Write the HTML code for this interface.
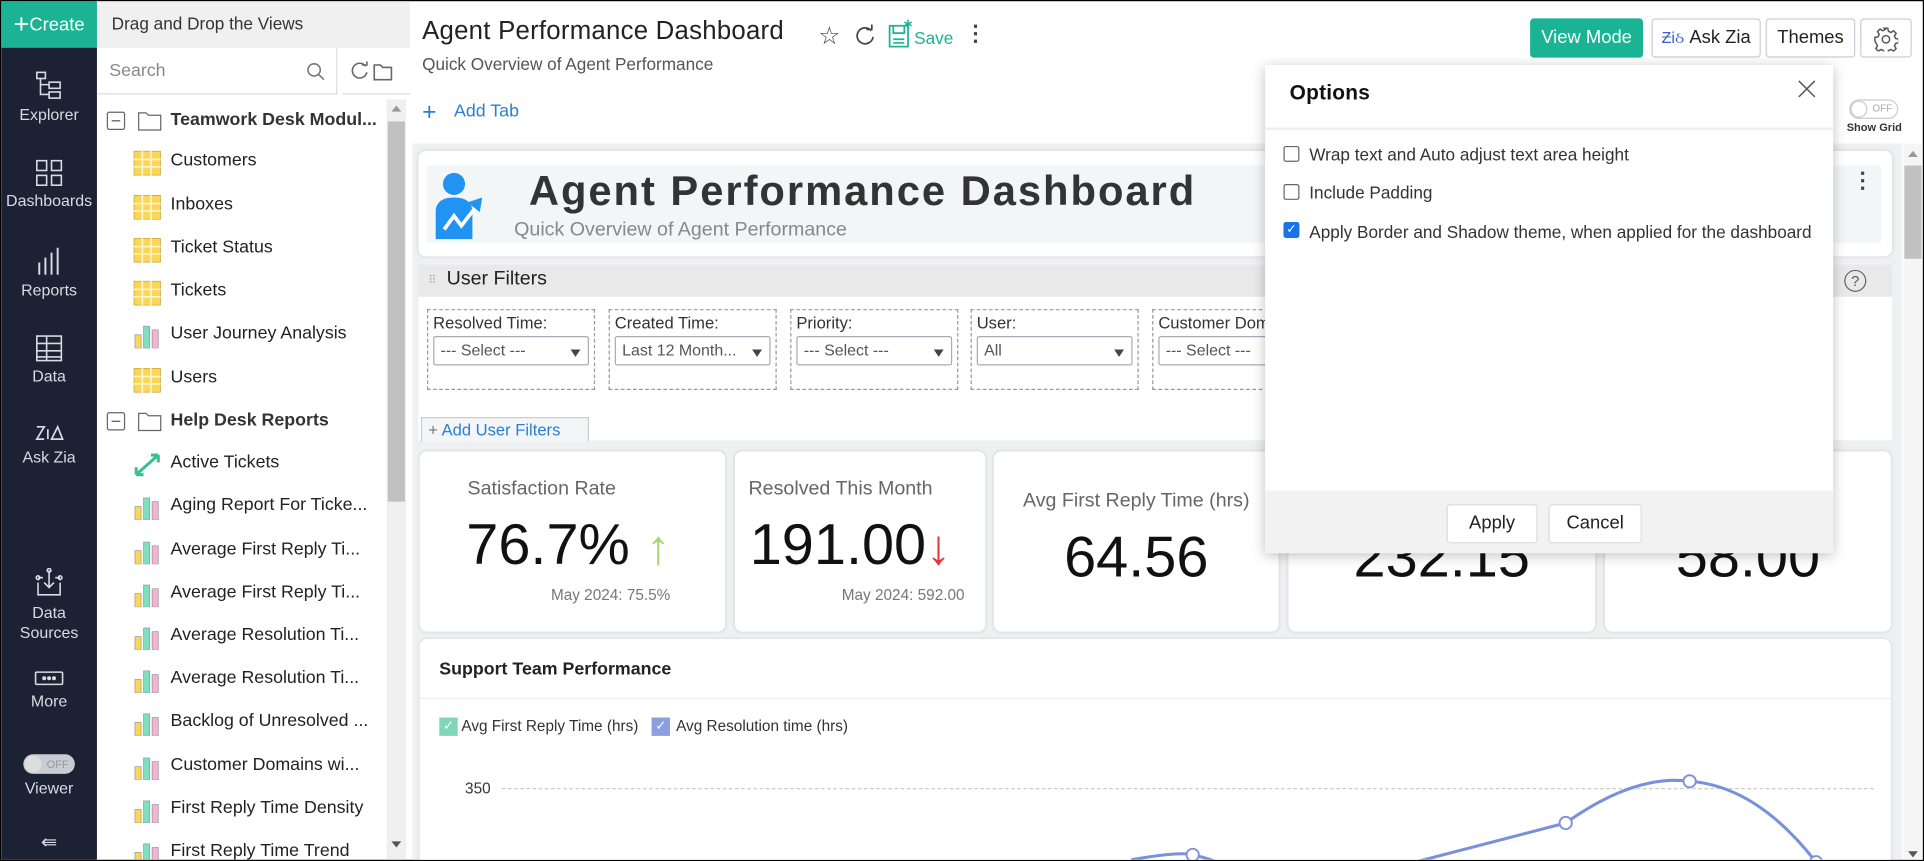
<!DOCTYPE html>
<html><head><meta charset="utf-8"><style>
*{box-sizing:border-box;margin:0;padding:0}
html,body{width:1924px;height:861px;overflow:hidden;background:#000}
#w{position:absolute;left:0;top:0;width:1568px;height:702px;transform:scale(1.22704,1.2265);transform-origin:0 0;font-family:"Liberation Sans",sans-serif;background:#fff;border:1px solid #000;overflow:hidden}
.a{position:absolute}
.nav{left:0;top:0;width:78px;height:702px;background:#1c2233;color:#d8dbe2;font-size:13px;text-align:center}
.nav .it{position:absolute;left:0;width:78px}
.nav svg{display:block;margin:0 auto 3px}
.tree div.r{position:absolute;left:0;height:20px;font-size:14.5px;color:#222;white-space:nowrap}
.gi{position:absolute;left:30px;top:1px;width:22px;height:20px}
.lbl{position:absolute;left:60px;top:1px}
.btn{position:absolute;border:1px solid #ccd;border-radius:3px;background:#fff;font-size:15px;color:#222;text-align:center;line-height:30px;height:32px}
.fb{position:absolute;top:251px;width:137px;height:66px;border:1px dashed #999;font-size:13.5px;color:#333;padding:3px 4px}
.fb .s{margin-top:3px;height:24px;border:1px solid #aab;border-radius:2px;padding:3px 5px;font-size:13px;color:#555;position:relative}
.fb .s:after{content:"";position:absolute;right:6px;top:10px;border:4px solid transparent;border-top:6px solid #444}
.card{position:absolute;background:#fff;border-radius:6px;box-shadow:0 0 3px rgba(0,0,0,.12)}
.kt{position:absolute;width:100%;text-align:center;color:#666;font-size:16px}
.kv{position:absolute;width:100%;text-align:center;color:#111;font-size:47px}
.cb{position:absolute;left:15px;width:13px;height:13px;border:1px solid #666;border-radius:2px;background:#fff}
.ot{position:absolute;left:36px;font-size:14px;color:#333}
</style></head><body><div id="w">

<div class="a nav">
 <div class="a" style="left:0;top:0;width:78px;height:38px;background:#1ab394;color:#fff;font-size:15px;line-height:38px">
  <span style="font-size:22px;vertical-align:-2px">+</span>Create</div>
 <div class="it" style="top:56px"><svg width="24" height="26" viewBox="0 0 24 26" fill="none" stroke="#d8dbe2" stroke-width="1.3"><rect x="2" y="2" width="7" height="5"/><rect x="12" y="10" width="9" height="5"/><rect x="12" y="18" width="9" height="5"/><path d="M5 7v13h7M5 12h7"/></svg>Explorer</div>
 <div class="it" style="top:128px"><svg width="24" height="24" viewBox="0 0 24 24" fill="none" stroke="#d8dbe2" stroke-width="1.3"><rect x="2" y="2" width="8" height="8"/><rect x="14" y="2" width="8" height="8"/><rect x="2" y="14" width="8" height="8"/><rect x="14" y="14" width="8" height="8"/></svg>Dashboards</div>
 <div class="it" style="top:199px"><svg width="24" height="26" viewBox="0 0 24 26" fill="none" stroke="#d8dbe2" stroke-width="1.6"><path d="M4 24v-10M9 24v-14M14 24v-18M19 24v-22"/></svg>Reports</div>
 <div class="it" style="top:271px"><svg width="24" height="24" viewBox="0 0 24 24" fill="none" stroke="#d8dbe2" stroke-width="1.3"><rect x="2" y="2" width="20" height="20"/><path d="M2 8h20M2 14h20M2 19h20M10 2v20"/></svg>Data</div>
 <div class="it" style="top:343px"><svg width="24" height="18" viewBox="0 0 24 18" fill="none" stroke="#d8dbe2" stroke-width="1.4"><path d="M2 4h6L2 14h6M11 6v8M14 14l5-10 4 10z"/></svg>Ask Zia</div>
 <div class="it" style="top:462px;line-height:16px"><svg width="26" height="26" viewBox="0 0 26 26" fill="none" stroke="#d8dbe2" stroke-width="1.3"><path d="M13 2v14M9 12l4 4 4-4M4 12v10h18V12M4 8h4M18 8h4"/><circle cx="13" cy="2" r="1.5"/><circle cx="4" cy="8" r="1.5"/><circle cx="22" cy="8" r="1.5"/></svg>Data<br>Sources</div>
 <div class="it" style="top:544px"><svg width="26" height="16" viewBox="0 0 26 16" fill="none" stroke="#d8dbe2" stroke-width="1.3"><rect x="2" y="3" width="22" height="10" rx="1"/><circle cx="9" cy="8" r="1" fill="#d8dbe2"/><circle cx="13" cy="8" r="1" fill="#d8dbe2"/><circle cx="17" cy="8" r="1" fill="#d8dbe2"/></svg>More</div>
 <div class="it" style="top:614px"><div style="margin:0 auto 4px;width:42px;height:16px;border-radius:8px;background:#c9ccd2;position:relative;font-size:9px;color:#999;text-align:right;padding-right:5px;line-height:16px"><div style="position:absolute;left:1px;top:1px;width:14px;height:14px;border-radius:7px;background:#ddd"></div>OFF</div>Viewer</div>
 <div class="it" style="top:676px;font-size:16px">⇚</div>
</div>

<div class="a" style="left:78px;top:0;width:255px;height:38px;background:#f0f0f0;font-size:14px;color:#333;padding:10px 12px">Drag and Drop the Views</div>
<div class="a" style="left:78px;top:38px;width:196px;height:38px;border-bottom:1px solid #ddd;border-right:1px solid #ddd;font-size:14.5px;color:#888;padding:11px 10px">Search
 <svg class="a" style="left:170px;top:11px" width="16" height="16" viewBox="0 0 16 16" fill="none" stroke="#777" stroke-width="1.3"><circle cx="7" cy="7" r="5"/><path d="M11 11l4 4"/></svg></div>
<div class="a" style="left:278px;top:38px;width:55px;height:38px;border-bottom:1px solid #ddd;color:#666">
 <svg class="a" style="left:6px;top:11px" width="36" height="16" viewBox="0 0 36 16" fill="none" stroke="#666" stroke-width="1.3"><path d="M13 4a6 6 0 1 0 1 5"/><path d="M10 3h4v-3"/><path d="M20 3h5l2 2h7v10H20z"/></svg></div>
<div class="a" style="left:314px;top:80px;width:16px;height:620px;background:#f0f0f0"><div style="position:absolute;left:1px;top:18px;width:14px;height:310px;background:#c1c1c1"></div><div style="position:absolute;left:4px;top:5px;border:4px solid transparent;border-bottom:5px solid #999;border-top:0"></div><div style="position:absolute;left:4px;bottom:10px;border:4px solid transparent;border-top:5px solid #555;border-bottom:0"></div></div>

<div class="a tree" style="left:78px;top:0;width:236px;height:702px">
 <div class="r" style="top:88px;left:8px;font-weight:bold;color:#333"><span style="position:absolute;left:0;top:2px;width:15px;height:15px;border:1px solid #666;border-radius:2px"><span style="position:absolute;left:3px;top:6px;width:7px;height:1px;background:#555"></span></span><svg style="position:absolute;left:25px;top:1px" width="20" height="17" viewBox="0 0 20 17" fill="none" stroke="#666"><path d="M1 2h6l2 2h10v12H1z"/></svg><span style="position:absolute;left:52px;top:1px">Teamwork Desk Modul...</span></div>
 <div class="r" style="top:121px"><svg class="gi" viewBox="0 0 22 20"><rect x="0" y="0" width="22" height="20" fill="#fcd757" stroke="#b89a30"/><path d="M7 0v20M14 0v20M0 7h22M0 13h22" stroke="#fff6cc" stroke-width="1.3"/></svg><span class="lbl">Customers</span></div>
 <div class="r" style="top:157px"><svg class="gi" viewBox="0 0 22 20"><rect x="0" y="0" width="22" height="20" fill="#fcd757" stroke="#b89a30"/><path d="M7 0v20M14 0v20M0 7h22M0 13h22" stroke="#fff6cc" stroke-width="1.3"/></svg><span class="lbl">Inboxes</span></div>
 <div class="r" style="top:192px"><svg class="gi" viewBox="0 0 22 20"><rect x="0" y="0" width="22" height="20" fill="#fcd757" stroke="#b89a30"/><path d="M7 0v20M14 0v20M0 7h22M0 13h22" stroke="#fff6cc" stroke-width="1.3"/></svg><span class="lbl">Ticket Status</span></div>
 <div class="r" style="top:227px"><svg class="gi" viewBox="0 0 22 20"><rect x="0" y="0" width="22" height="20" fill="#fcd757" stroke="#b89a30"/><path d="M7 0v20M14 0v20M0 7h22M0 13h22" stroke="#fff6cc" stroke-width="1.3"/></svg><span class="lbl">Tickets</span></div>
 <div class="r" style="top:262px"><svg class="gi" viewBox="0 0 22 20"><rect x="1" y="9" width="5" height="11" fill="#fcd757" stroke="#999" stroke-width=".6"/><rect x="8" y="2" width="5" height="18" fill="#7fe0c0" stroke="#999" stroke-width=".6"/><rect x="15" y="5" width="5" height="15" fill="#f4b3d6" stroke="#999" stroke-width=".6"/></svg><span class="lbl">User Journey Analysis</span></div>
 <div class="r" style="top:298px"><svg class="gi" viewBox="0 0 22 20"><rect x="0" y="0" width="22" height="20" fill="#fcd757" stroke="#b89a30"/><path d="M7 0v20M14 0v20M0 7h22M0 13h22" stroke="#fff6cc" stroke-width="1.3"/></svg><span class="lbl">Users</span></div>
 <div class="r" style="top:333px;left:8px;font-weight:bold;color:#333"><span style="position:absolute;left:0;top:2px;width:15px;height:15px;border:1px solid #666;border-radius:2px"><span style="position:absolute;left:3px;top:6px;width:7px;height:1px;background:#555"></span></span><svg style="position:absolute;left:25px;top:1px" width="20" height="17" viewBox="0 0 20 17" fill="none" stroke="#666"><path d="M1 2h6l2 2h10v12H1z"/></svg><span style="position:absolute;left:52px;top:1px">Help Desk Reports</span></div>
 <div class="r" style="top:367px"><svg class="gi" viewBox="0 0 22 20" fill="none" stroke="#3bbf8f" stroke-width="2.5"><path d="M2 18L20 2M2 18v-6M2 18h6M20 2h-6M20 2v6"/></svg><span class="lbl">Active Tickets</span></div>
 <div class="r" style="top:402px"><svg class="gi" viewBox="0 0 22 20"><rect x="1" y="9" width="5" height="11" fill="#fcd757" stroke="#999" stroke-width=".6"/><rect x="8" y="2" width="5" height="18" fill="#7fe0c0" stroke="#999" stroke-width=".6"/><rect x="15" y="5" width="5" height="15" fill="#f4b3d6" stroke="#999" stroke-width=".6"/></svg><span class="lbl">Aging Report For Ticke...</span></div>
 <div class="r" style="top:438px"><svg class="gi" viewBox="0 0 22 20"><rect x="1" y="9" width="5" height="11" fill="#fcd757" stroke="#999" stroke-width=".6"/><rect x="8" y="2" width="5" height="18" fill="#7fe0c0" stroke="#999" stroke-width=".6"/><rect x="15" y="5" width="5" height="15" fill="#f4b3d6" stroke="#999" stroke-width=".6"/></svg><span class="lbl">Average First Reply Ti...</span></div>
 <div class="r" style="top:473px"><svg class="gi" viewBox="0 0 22 20"><rect x="1" y="9" width="5" height="11" fill="#fcd757" stroke="#999" stroke-width=".6"/><rect x="8" y="2" width="5" height="18" fill="#7fe0c0" stroke="#999" stroke-width=".6"/><rect x="15" y="5" width="5" height="15" fill="#f4b3d6" stroke="#999" stroke-width=".6"/></svg><span class="lbl">Average First Reply Ti...</span></div>
 <div class="r" style="top:508px"><svg class="gi" viewBox="0 0 22 20"><rect x="1" y="9" width="5" height="11" fill="#fcd757" stroke="#999" stroke-width=".6"/><rect x="8" y="2" width="5" height="18" fill="#7fe0c0" stroke="#999" stroke-width=".6"/><rect x="15" y="5" width="5" height="15" fill="#f4b3d6" stroke="#999" stroke-width=".6"/></svg><span class="lbl">Average Resolution Ti...</span></div>
 <div class="r" style="top:543px"><svg class="gi" viewBox="0 0 22 20"><rect x="1" y="9" width="5" height="11" fill="#fcd757" stroke="#999" stroke-width=".6"/><rect x="8" y="2" width="5" height="18" fill="#7fe0c0" stroke="#999" stroke-width=".6"/><rect x="15" y="5" width="5" height="15" fill="#f4b3d6" stroke="#999" stroke-width=".6"/></svg><span class="lbl">Average Resolution Ti...</span></div>
 <div class="r" style="top:578px"><svg class="gi" viewBox="0 0 22 20"><rect x="1" y="9" width="5" height="11" fill="#fcd757" stroke="#999" stroke-width=".6"/><rect x="8" y="2" width="5" height="18" fill="#7fe0c0" stroke="#999" stroke-width=".6"/><rect x="15" y="5" width="5" height="15" fill="#f4b3d6" stroke="#999" stroke-width=".6"/></svg><span class="lbl">Backlog of Unresolved ...</span></div>
 <div class="r" style="top:614px"><svg class="gi" viewBox="0 0 22 20"><rect x="1" y="9" width="5" height="11" fill="#fcd757" stroke="#999" stroke-width=".6"/><rect x="8" y="2" width="5" height="18" fill="#7fe0c0" stroke="#999" stroke-width=".6"/><rect x="15" y="5" width="5" height="15" fill="#f4b3d6" stroke="#999" stroke-width=".6"/></svg><span class="lbl">Customer Domains wi...</span></div>
 <div class="r" style="top:649px"><svg class="gi" viewBox="0 0 22 20"><rect x="1" y="9" width="5" height="11" fill="#fcd757" stroke="#999" stroke-width=".6"/><rect x="8" y="2" width="5" height="18" fill="#7fe0c0" stroke="#999" stroke-width=".6"/><rect x="15" y="5" width="5" height="15" fill="#f4b3d6" stroke="#999" stroke-width=".6"/></svg><span class="lbl">First Reply Time Density</span></div>
 <div class="r" style="top:684px"><svg class="gi" viewBox="0 0 22 20"><rect x="1" y="9" width="5" height="11" fill="#fcd757" stroke="#999" stroke-width=".6"/><rect x="8" y="2" width="5" height="18" fill="#7fe0c0" stroke="#999" stroke-width=".6"/><rect x="15" y="5" width="5" height="15" fill="#f4b3d6" stroke="#999" stroke-width=".6"/></svg><span class="lbl">First Reply Time Trend</span></div>
</div>

<!-- main header -->
<div class="a" style="left:343px;top:13px;font-size:21px;color:#222;letter-spacing:.2px">Agent Performance Dashboard</div>
<div class="a" style="left:343px;top:43px;font-size:14px;color:#555">Quick Overview of Agent Performance</div>
<div class="a" style="left:666px;top:16px;font-size:20px;color:#444">☆</div>
<svg class="a" style="left:695px;top:19px" width="18" height="18" viewBox="0 0 18 18" fill="none" stroke="#444" stroke-width="1.4"><path d="M14 5a6.5 6.5 0 1 0 1.5 5"/><path d="M10 4h4.5V0"/></svg>
<svg class="a" style="left:722px;top:14px" width="22" height="24" viewBox="0 0 22 24" fill="none" stroke="#1ab394" stroke-width="1.4"><rect x="2" y="6" width="15" height="17"/><path d="M5 6v6h9V6M5 17h9M5 20h9"/><path d="M17 1v7M14 3l6 3M20 3l-6 3" stroke-width="1.2"/></svg>
<div class="a" style="left:744px;top:22px;font-size:14px;color:#1ab394">Save</div>
<div class="a" style="left:785px;top:16px;font-size:18px;color:#444;font-weight:bold">⋮</div>
<div class="a" style="left:343px;top:80px;font-size:20px;color:#2a7fd4">+</div>
<div class="a" style="left:369px;top:82px;font-size:14.5px;color:#2a7fd4">Add Tab</div>

<div class="btn" style="left:1246px;top:14px;width:92px;background:#1ab394;border-color:#1ab394;color:#fff">View Mode</div>
<div class="btn" style="left:1345px;top:14px;width:89px"><span style="color:#3a5fc0;font-size:13px">Ƶiઠ</span> Ask Zia</div>
<div class="btn" style="left:1438px;top:14px;width:73px">Themes</div>
<div class="btn" style="left:1515px;top:14px;width:42px"><svg style="margin-top:6px" width="20" height="20" viewBox="0 0 20 20" fill="none" stroke="#555" stroke-width="1.2"><circle cx="10" cy="10" r="3"/><path d="M8.5 1h3l.5 2.5 2 1 2.2-1.4 2.1 2.1-1.4 2.2 1 2 2.5.5v3l-2.5.5-1 2 1.4 2.2-2.1 2.1-2.2-1.4-2 1-.5 2.5h-3l-.5-2.5-2-1-2.2 1.4-2.1-2.1 1.4-2.2-1-2L1 11.5v-3l2.5-.5 1-2-1.4-2.2 2.1-2.1 2.2 1.4 2-1z"/></svg></div>
<div class="a" style="left:1506px;top:80px;width:40px;height:16px;border:1px solid #ccc;border-radius:8px;font-size:8px;color:#aaa;text-align:right;padding-right:4px;line-height:14px"><div style="position:absolute;left:0;top:0;width:14px;height:14px;border-radius:7px;border:1px solid #ccc;background:#fff"></div>OFF</div>
<div class="a" style="left:1504px;top:98px;font-size:9px;color:#333;font-weight:bold">Show Grid</div>

<!-- canvas -->
<div class="a" style="left:335px;top:116px;width:1214px;height:586px;background:#eef0f1"></div>
<div class="a" style="left:1550px;top:116px;width:16px;height:586px;background:#f5f5f5"><div style="position:absolute;left:1px;top:18px;width:14px;height:76px;background:#c1c1c1"></div><div style="position:absolute;left:4px;top:6px;border:4px solid transparent;border-bottom:5px solid #999;border-top:0"></div><div style="position:absolute;left:4px;bottom:4px;border:4px solid transparent;border-top:5px solid #555;border-bottom:0"></div></div>

<div class="card" style="left:340px;top:122px;width:1201px;height:86px">
 <div class="a" style="left:7px;top:12px;width:1185px;height:63px;background:#f3f6f7"></div>
 <svg class="a" style="left:14px;top:12px" width="40" height="64" viewBox="0 0 40 64"><circle cx="15" cy="15" r="9" fill="#2193f3"/><path d="M0 60V38q0-12 15-12t15 12v22z" fill="#2193f3"/><path d="M7 52l8-11 6 8 14-18" stroke="#fff" stroke-width="3" fill="none"/><path d="M26 30l12-4-2 12" fill="#2193f3"/></svg>
 <div class="a" style="left:90px;top:14px;font-size:34px;font-weight:bold;color:#333;letter-spacing:1.6px">Agent Performance Dashboard</div>
 <div class="a" style="left:78px;top:56px;font-size:16px;color:#888">Quick Overview of Agent Performance</div>
 <div class="a" style="left:1168px;top:14px;font-size:18px;color:#444;font-weight:bold">⋮</div>
</div>

<div class="a" style="left:340px;top:215px;width:1201px;height:26px;background:#e9e9e9"></div>
<div class="a" style="left:348px;top:222px;font-size:9px;color:#aaa">⠿</div>
<div class="a" style="left:363px;top:218px;font-size:16px;color:#222">User Filters</div>
<div class="a" style="left:1502px;top:219px;width:18px;height:18px;border:1px solid #666;border-radius:9px;font-size:12px;text-align:center;line-height:16px;color:#555">?</div>
<div class="a" style="left:340px;top:241px;width:1201px;height:117px;background:#fff"></div>
<div class="fb" style="left:347px">Resolved Time:<div class="s">--- Select ---</div></div>
<div class="fb" style="left:495px">Created Time:<div class="s">Last 12 Month...</div></div>
<div class="fb" style="left:643px">Priority:<div class="s">--- Select ---</div></div>
<div class="fb" style="left:790px">User:<div class="s">All</div></div>
<div class="fb" style="left:938px;width:100px;overflow:hidden;white-space:nowrap">Customer Domains<div class="s" style="width:140px">--- Select ---</div></div>
<div class="a" style="left:342px;top:339px;width:137px;height:20px;border:1px solid #ccc;border-bottom:0;background:#f3f5f6;font-size:13.5px;color:#2a7fd4;padding:2px 5px"><span style="color:#777">+</span> Add User Filters</div>

<div class="card" style="left:341px;top:367px;width:249px;height:147px"><div class="kt" style="top:22px;text-align:left;left:39px;width:auto">Satisfaction Rate</div><div class="a" style="left:38px;top:48px;font-size:47px;color:#111">76.7% <span style="color:#a5d86e;font-weight:normal;font-size:40px">↑</span></div><div class="a" style="left:107px;top:110px;font-size:12.5px;color:#777">May 2024: 75.5%</div></div>
<div class="card" style="left:598px;top:367px;width:204px;height:147px"><div class="a" style="left:11px;top:22px;font-size:16px;color:#666">Resolved This Month</div><div class="a" style="left:12px;top:48px;font-size:47px;color:#111">191.00<span style="color:#e0383a;font-size:40px">↓</span></div><div class="a" style="left:87px;top:110px;font-size:12.5px;color:#777">May 2024: 592.00</div></div>
<div class="card" style="left:809px;top:367px;width:232px;height:147px"><div class="kt" style="top:32px">Avg First Reply Time (hrs)</div><div class="kv" style="top:58px">64.56</div></div>
<div class="card" style="left:1049px;top:367px;width:250px;height:147px"><div class="kv" style="top:58px">232.15</div></div>
<div class="card" style="left:1307px;top:367px;width:233px;height:147px"><div class="kv" style="top:58px">58.00</div></div>

<div class="card" style="left:341px;top:520px;width:1199px;height:190px">
 <div class="a" style="left:16px;top:17px;font-size:14.5px;font-weight:bold;color:#222">Support Team Performance</div>
 <div class="a" style="left:0;top:48px;width:100%;height:1px;background:#eee"></div>
 <div class="a" style="left:16px;top:64px;width:15px;height:15px;background:#7fd6b8;color:#fff;font-size:11px;text-align:center">✓</div>
 <div class="a" style="left:34px;top:64px;font-size:12.5px;color:#333">Avg First Reply Time (hrs)</div>
 <div class="a" style="left:189px;top:64px;width:15px;height:15px;background:#8b9fe0;color:#fff;font-size:11px;text-align:center">✓</div>
 <div class="a" style="left:209px;top:64px;font-size:12.5px;color:#333">Avg Resolution time (hrs)</div>
 <div class="a" style="left:37px;top:115px;font-size:12.5px;color:#333">350</div>
 <svg class="a" style="left:0;top:100px" width="1199" height="90" viewBox="0 0 1199 90"><path d="M67 22H1186" stroke="#ccc" stroke-dasharray="3 2"/><path d="M580 80Q620 73 630 76Q650 80 680 95M780 90L934 50Q990 10 1035 16Q1090 20 1138 82" stroke="#7b90dc" stroke-width="2.5" fill="none"/><g fill="#fff" stroke="#7b90dc" stroke-width="1.5"><circle cx="630" cy="76" r="5"/><circle cx="934" cy="50" r="5"/><circle cx="1035" cy="16" r="5"/><circle cx="1138" cy="82" r="5"/></g></svg>
</div>

<!-- dialog -->
<div class="a" style="left:1030px;top:52px;width:463px;height:398px;background:#fff;box-shadow:0 2px 10px rgba(0,0,0,.25)">
 <div class="a" style="left:20px;top:13px;font-size:17px;color:#111;font-weight:bold;letter-spacing:.2px">Options</div>
 <svg class="a" style="left:434px;top:12px" width="15" height="15" viewBox="0 0 15 15" stroke="#555" stroke-width="1.2"><path d="M1 1l13 13M14 1L1 14"/></svg>
 <div class="a" style="left:0;top:51px;width:100%;height:2px;background:#eee"></div>
 <div class="cb" style="top:66px"></div><div class="ot" style="top:65px">Wrap text and Auto adjust text area height</div>
 <div class="cb" style="top:97px"></div><div class="ot" style="top:96px">Include Padding</div>
 <div class="cb" style="top:128px;background:#1a73e8;border-color:#1a73e8;color:#fff;font-size:10px;line-height:11px;text-align:center">✓</div><div class="ot" style="top:128px">Apply Border and Shadow theme, when applied for the dashboard</div>
 <div class="a" style="left:0;top:347px;width:100%;height:51px;background:#f2f2f2"></div>
 <div class="btn" style="left:148px;top:358px;width:74px;border-color:#ddd">Apply</div>
 <div class="btn" style="left:231px;top:358px;width:76px;border-color:#ddd">Cancel</div>
</div>

</div></body></html>
